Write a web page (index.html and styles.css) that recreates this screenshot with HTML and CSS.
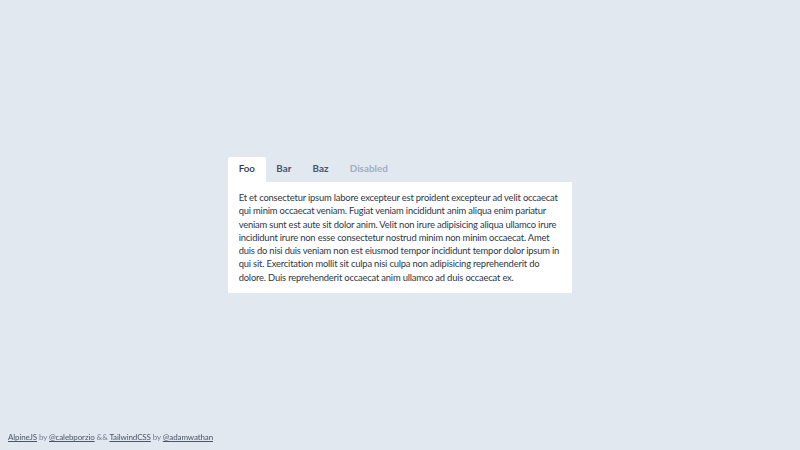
FILE: index.html
```html
<!DOCTYPE html>
<html lang="en">
<head>
<meta charset="utf-8">
<title>Tabs</title>
<link rel="stylesheet" href="styles.css">
</head>
<body>
<main class="stage">
  <div class="tabs">
    <div class="tab-list">
      <button class="tab tab-active">Foo</button>
      <button class="tab">Bar</button>
      <button class="tab">Baz</button>
      <button class="tab tab-disabled" disabled>Disabled</button>
    </div>
    <div class="panel">
      <p>Et et consectetur ipsum labore excepteur est proident excepteur ad velit occaecat qui minim occaecat veniam. Fugiat veniam incididunt anim aliqua enim pariatur veniam sunt est aute sit dolor anim. Velit non irure adipisicing aliqua ullamco irure incididunt irure non esse consectetur nostrud minim non minim occaecat. Amet duis do nisi duis veniam non est eiusmod tempor incididunt tempor dolor ipsum in qui sit. Exercitation mollit sit culpa nisi culpa non adipisicing reprehenderit do dolore. Duis reprehenderit occaecat anim ullamco ad duis occaecat ex.</p>
    </div>
  </div>
</main>
<footer class="credits">
  <a href="#">AlpineJS</a> by <a href="#">@calebporzio</a> &amp;&amp; <a href="#">TailwindCSS</a> by <a href="#">@adamwathan</a>
</footer>
</body>
</html>
```
FILE: styles.css
```css
html, body {
  margin: 0;
  padding: 0;
}
body {
  background: #e2e8f0;
  font-family: Lato, "Noto Sans", sans-serif;
  color: #2d3748;
}
.stage {
  min-height: 100vh;
  display: flex;
  align-items: center;
  justify-content: center;
}
.tabs {
  width: 344px;
}
.tab-list {
  display: flex;
}
.tab {
  font-family: inherit;
  font-size: 9.8px;
  font-weight: 700;
  line-height: 13.33px;
  padding: 5.83px 10.67px;
  border: 0;
  background: transparent;
  color: #4a5568;
  cursor: pointer;
  border-top-left-radius: 2px;
  border-top-right-radius: 2px;
}
.tab-active {
  background: #ffffff;
  color: #2d3748;
  font-weight: 600;
}
.tab-disabled {
  color: #a0aec0;
  cursor: default;
}
.panel {
  background: #ffffff;
  padding: 9.33px 10.67px;
}
.panel p {
  margin: 0;
  font-size: 9.4px;
  line-height: 13.33px;
  letter-spacing: -0.18px;
  color: #2d3748;
}
.credits {
  position: fixed;
  left: 8px;
  bottom: 8px;
  font-size: 8px;
  line-height: 10px;
  letter-spacing: -0.12px;
  color: #718096;
}
.credits a {
  color: #4a5568;
}
```
